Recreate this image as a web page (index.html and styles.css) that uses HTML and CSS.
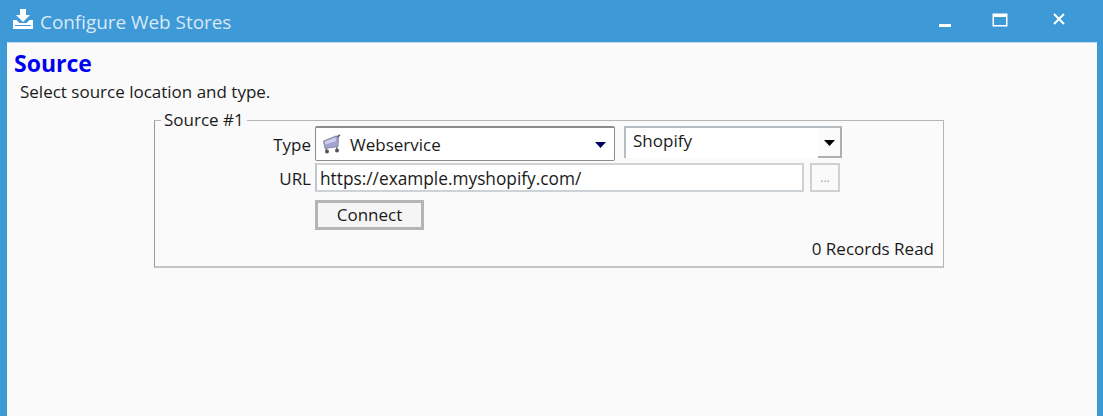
FILE: index.html
```
<!DOCTYPE html>
<html lang="en">
<head>
<meta charset="utf-8">
<title>Configure Web Stores</title>
<link rel="stylesheet" href="styles.css">
</head>
<body>
<div class="window">
  <header class="titlebar">
    <svg class="app-icon" width="22" height="21" viewBox="0 0 22 21"><path fill="#fff" d="M8 0h6v6h4l-7 7-7-7h4z"/><path fill="#fff" d="M1 11h3.500l3 3h7l3-3H21v9H1z"/><rect x="3" y="16" width="16" height="1" fill="#3e9ad6"/></svg>
    <span class="title">Configure Web Stores</span>
    <div class="controls">
      <svg width="14" height="14" viewBox="0 0 14 14" class="ctl-min"><rect x="1" y="10" width="12" height="3" fill="#fff"/></svg>
      <svg width="16" height="14" viewBox="0 0 16 14" class="ctl-max"><path fill="none" stroke="#fff" stroke-width="1.500" d="M1.250 1.250h13.500v11.500H1.250z"/><rect x="1" y="1" width="14" height="3" fill="#fff"/></svg>
      <svg width="14" height="14" viewBox="0 0 14 14" class="ctl-close"><path fill="none" stroke="#fff" stroke-width="2" d="M2 2l10 10M12 2L2 12"/></svg>
    </div>
  </header>
  <main class="content">
    <h1 class="heading">Source</h1>
    <p class="subtitle">Select source location and type.</p>
    <fieldset class="group">
      <legend class="group-title">Source #1</legend>
      <div class="row row-type">
        <label class="row-label">Type</label>
        <div class="combo">
          <svg class="cart" width="20" height="21" viewBox="0 0 20 21">
            <path fill="#a3a3d2" stroke="#8a8aa4" stroke-width="1" d="M1.500 8 14 3 16.500 4 16 13.500 3 15.500z"/>
            <path fill="#cfcfec" d="M3 8.500 13.500 4.500 14 8 3.500 11.500z"/>
            <path fill="none" stroke="#6f6f7a" stroke-width="2" d="M15 4 18 2"/>
            <path fill="none" stroke="#7a7a8a" stroke-width="1.500" d="M4 15.500 4.500 17.500M14.500 14 15 16"/>
            <circle cx="5" cy="18.500" r="2" fill="#555"/><circle cx="15" cy="17.500" r="2" fill="#555"/>
          </svg>
          <span class="combo-text">Webservice</span>
          <svg class="combo-arrow" width="11" height="6" viewBox="0 0 11 6"><path fill="#000060" d="M0 0h11L5.500 6z"/></svg>
        </div>
        <div class="select">
          <span class="select-text">Shopify</span>
          <span class="select-btn"><svg width="11" height="6" viewBox="0 0 11 6"><path fill="#000" d="M0 0h11L5.500 6z"/></svg></span>
        </div>
      </div>
      <div class="row row-url">
        <label class="row-label">URL</label>
        <div class="url-input">https://example.myshopify.com/</div>
        <div class="browse">...</div>
      </div>
      <div class="row-connect"><button class="connect" type="button">Connect</button></div>
      <div class="records">0 Records Read</div>
    </fieldset>
  </main>
</div>
</body>
</html>
```
FILE: styles.css
```
html, body { margin: 0; height: 100%; overflow: hidden; }
body { font-family: "Open Sans", "Noto Sans", sans-serif; font-size: 17px; color: #1a1a1a; }
.window { width: 1103px; height: 416px; background: #3e9ad6; display: flex; flex-direction: column; padding: 0 6px 0 7px; box-sizing: border-box; }
.titlebar { height: 42px; flex: none; display: flex; align-items: center; margin-left: 4px; color: #d8e9f6; }
.app-icon { margin: -3px 7px 0 1px; }
.title { font-size: 18.900px; margin-top: 2px; margin-left: -1px; }
.controls { margin-left: auto; display: flex; align-items: center; }
.controls svg { display: block; }
.ctl-min { margin: 0 40px 0 0; }
.ctl-max { margin: -2px 44px 0 0; }
.ctl-close { margin: -5px 31px 0 0; }
.content { flex: 1; background: #fafafa; border-top: 1px solid #bcdcf0; padding: 6px 0 0 7px; }
.heading { margin: 0; font-size: 23px; line-height: 28px; font-weight: 700; color: #0000f0; }
.subtitle { margin: 5px 0 0 6px; line-height: 20px; font-size: 17px; }
.group { position: relative; box-sizing: border-box; width: 790px; height: 158px; margin: 8px 0 0 140px; padding: 0; border: 0; border-top: 1px solid #b5b5b5; border-right: 1px solid #b5b5b5; border-bottom: 2px solid #c4c4c4; border-left: 1px solid #9a9a9a; min-width: 0; }
.group-title { margin-left: 6px; padding: 0 3px; line-height: 20px; font-size: 17px; }
.row { display: flex; align-items: center; }
.row-label { width: 156px; text-align: right; margin-right: 4px; font-size: 17px; padding-top: 2px; }
.row-type { height: 36px; margin-top: -5px; }
.combo { box-sizing: border-box; width: 300px; height: 35px; background: #fff; border: 1px solid #8c8c8c; border-top-width: 2px; border-radius: 2px; display: flex; align-items: center; padding: 0 8px 0 6px; }
.cart { margin-right: 8px; }
.combo-text { font-size: 17px; flex: 1; margin-top: 1px; }
.combo-arrow { margin-top: 3px; }
.select { box-sizing: border-box; width: 218px; height: 32px; margin: -3px 0 0 9px; background: #fff; border-top: 2px solid #b5bcc2; border-left: 2px solid #b5bcc2; border-right: 2px solid #aab0b4; border-bottom: 0; display: flex; }
.select-text { flex: 1; padding-left: 7px; line-height: 26px; font-size: 17px; }
.select-btn { width: 22px; height: 30px; background: #fbfbfb; display: flex; align-items: center; justify-content: center; box-shadow: inset 0 -2px 0 #aab0b4; }
.row-url { height: 30px; margin-top: 1px; }
.url-input { box-sizing: border-box; width: 489px; height: 29px; background: #fff; border: 2px solid #cdd2d6; border-left-color: #c0c5c9; line-height: 27px; padding-left: 3px; font-size: 17.300px; }
.browse { box-sizing: border-box; width: 30px; height: 29px; margin-left: 6px; border: 2px solid #d0d0d0; color: #a0a0a0; font-size: 12px; text-align: center; line-height: 25px; }
.row-connect { padding-left: 160px; margin-top: 8px; }
.connect { display: block; box-sizing: border-box; width: 109px; height: 30px; padding: 0; background: #f5f5f5; border: 3px solid #b4b4b4; font: inherit; font-size: 17px; line-height: 22px; color: #1a1a1a; }
.records { position: absolute; right: 9px; bottom: 6px; line-height: 22px; font-size: 17px; }
```
